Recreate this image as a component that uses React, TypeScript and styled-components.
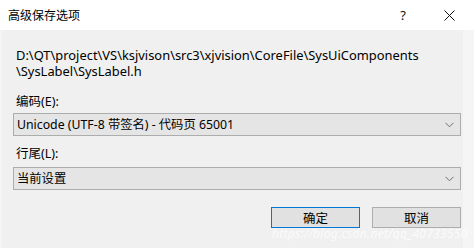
import React from "react";
import styled, { createGlobalStyle } from "styled-components";

const Global = createGlobalStyle`
  html, body { margin: 0; padding: 0; background: #f5f5f5; }
  body { font-family: "Noto Sans", "Noto Sans CJK SC", sans-serif; }
`;

const Window = styled.div`
  position: relative;
  width: 474px;
  height: 248px;
  display: flex;
  flex-direction: column;
  overflow: hidden;
  font-family: "Noto Sans", "Noto Sans CJK SC", sans-serif;
  font-size: 12px;
  color: #000;
`;

const TitleBar = styled.div`
  height: 30px;
  background: #fff;
  display: flex;
  align-items: center;
  padding-left: 8px;
  padding-right: 2px;
  flex-shrink: 0;
`;

const Title = styled.div`
  flex: 1;
  font-size: 12px;
  line-height: 16px;
  font-family: "Noto Sans CJK SC", sans-serif;
`;

const TitleButton = styled.div`
  width: 46px;
  height: 30px;
  display: flex;
  align-items: center;
  justify-content: center;
  font-size: 13px;
  color: #111;
`;

const Body = styled.div`
  flex: 1;
  background: #f0f0f0;
  border-right: 11px solid #f5f5f5;
  border-left: 2px solid #f4f4f4;
  padding: 17px 2px 0 11px;
  display: flex;
  flex-direction: column;
`;

const PathText = styled.div`
  padding-left: 3px;
  line-height: 16px;
  font-size: 12.9px;
`;

const Label = styled.div<{ $mt: number }>`
  margin-top: ${(p) => p.$mt}px;
  padding-left: 3px;
  line-height: 16px;
  font-size: 12.5px;
`;

const Select = styled.div<{ $mt: number }>`
  margin-top: ${(p) => p.$mt}px;
  height: 23px;
  box-sizing: border-box;
  border: 1px solid #adadad;
  background: #e5e5e5;
  display: flex;
  align-items: center;
  padding: 0 6px 0 3px;
`;

const SelectText = styled.div`
  flex: 1;
  line-height: 16px;
  font-size: 12.3px;
`;

const Chevron = () => (
  <svg width="9" height="6" viewBox="0 0 9 6">
    <path d="M0.5 0.8 L4.5 4.8 L8.5 0.8" fill="none" stroke="#6d6d6d" strokeWidth="1" />
  </svg>
);

const ButtonRow = styled.div`
  margin-top: 17px;
  display: flex;
  justify-content: flex-end;
  gap: 12px;
`;

const Button = styled.div<{ $primary?: boolean }>`
  width: 89px;
  height: 21px;
  box-sizing: border-box;
  background: #e1e1e1;
  border: 1px solid ${(p) => (p.$primary ? "#0078d7" : "#adadad")};
  display: flex;
  align-items: center;
  justify-content: center;
  font-family: "Noto Sans CJK SC", sans-serif;
  font-size: 12.5px;
`;

const Watermark = styled.div`
  position: absolute;
  left: 272px;
  top: 225px;
  font-size: 12px;
  font-style: italic;
  color: rgba(255, 255, 255, 0.75);
  letter-spacing: 0.3px;
  white-space: nowrap;
`;

export default function App() {
  return (
    <>
      <Global />
      <Window>
        <TitleBar>
          <Title>高级保存选项</Title>
          <TitleButton>?</TitleButton>
          <TitleButton>
            <svg width="11" height="11" viewBox="0 0 11 11">
              <path d="M0.5 0.5 L10.5 10.5 M10.5 0.5 L0.5 10.5" stroke="#111" strokeWidth="1" />
            </svg>
          </TitleButton>
        </TitleBar>
        <Body>
          <PathText>
            D:\QT\project\VS\ksjvison\src3\xjvision\CoreFile\SysUiComponents
            <br />
            \SysLabel\SysLabel.h
          </PathText>
          <Label $mt={15}>编码(E):</Label>
          <Select $mt={3}>
            <SelectText>Unicode (UTF-8 带签名) - 代码页 65001</SelectText>
            <Chevron />
          </Select>
          <Label $mt={10}>行尾(L):</Label>
          <Select $mt={5}>
            <SelectText>当前设置</SelectText>
            <Chevron />
          </Select>
          <ButtonRow>
            <Button $primary>确定</Button>
            <Button>取消</Button>
          </ButtonRow>
        </Body>
        <Watermark>https://blog.csdn.net/qq_40733550</Watermark>
      </Window>
    </>
  );
}
